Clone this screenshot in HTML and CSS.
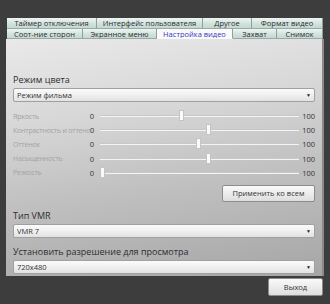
FILE: index.html
```html
<!DOCTYPE html>
<html lang="ru">
<head>
  <meta charset="UTF-8">
  <title>Настройка видео</title>
  <link rel="stylesheet" href="styles.css">
</head>
<body>
  <div class="window">
    <div class="tabs">
      <div class="tab-row">
        <div class="tab w90">Таймер отключения</div>
        <div class="tab w106">Интерфейс пользователя</div>
        <div class="tab w49">Другое</div>
        <div class="tab w71">Формат видео</div>
      </div>
      <div class="tab-row">
        <div class="tab w76">Соот-ние сторон</div>
        <div class="tab w74">Экранное меню</div>
        <div class="tab w76 active">Настройка видео</div>
        <div class="tab w44">Захват</div>
        <div class="tab w46">Снимок</div>
      </div>
    </div>

    <div class="panel">
      <div class="label first">Режим цвета</div>
      <div class="select">Режим фильма<span class="arrow">&#9660;</span></div>

      <div class="sliders">
        <div class="slider-row">
          <span class="s-label">Яркость</span><span class="s-min">0</span>
          <div class="track"><div class="thumb" style="left: 79px"></div></div>
          <span class="s-max">100</span>
        </div>
        <div class="slider-row">
          <span class="s-label">Контрастность и оттено</span><span class="s-min">0</span>
          <div class="track"><div class="thumb" style="left: 106px"></div></div>
          <span class="s-max">100</span>
        </div>
        <div class="slider-row">
          <span class="s-label">Оттенок</span><span class="s-min">0</span>
          <div class="track"><div class="thumb" style="left: 96px"></div></div>
          <span class="s-max">100</span>
        </div>
        <div class="slider-row">
          <span class="s-label">Насыщенность</span><span class="s-min">0</span>
          <div class="track"><div class="thumb" style="left: 106px"></div></div>
          <span class="s-max">100</span>
        </div>
        <div class="slider-row">
          <span class="s-label">Резкость</span><span class="s-min">0</span>
          <div class="track"><div class="thumb" style="left: 0px"></div></div>
          <span class="s-max">100</span>
        </div>
      </div>

      <div class="apply-wrap">
        <button class="btn apply">Применить ко всем настройкам</button>
      </div>

      <div class="label">Тип VMR</div>
      <div class="select">VMR 7<span class="arrow">&#9660;</span></div>

      <div class="label">Установить разрешение для просмотра</div>
      <div class="select">720x480<span class="arrow">&#9660;</span></div>
    </div>

    <div class="footer">
      <button class="btn exit">Выход</button>
    </div>
  </div>
</body>
</html>
```

FILE: styles.css
```css
* {
  margin: 0;
  padding: 0;
  box-sizing: border-box;
}

body {
  width: 330px;
  height: 304px;
  background: #3d3d3d;
  font-family: 'Open Sans', 'Liberation Sans', sans-serif;
  color: #333;
  overflow: hidden;
}

.window {
  padding: 18px 6px 0 6px;
}

.tabs {
  padding-left: 1px;
}

.tab-row {
  display: flex;
  height: 10.5px;
}

.tab {
  height: 100%;
  background: linear-gradient(180deg, #eef5f2 0%, #d2e3de 55%, #c4d8d2 100%);
  border-right: 1px solid #8f9f9b;
  border-bottom: 1px solid #9aaaa6;
  font-size: 7.5px;
  line-height: 10px;
  text-align: center;
  white-space: nowrap;
  overflow: hidden;
  color: #2c2c2c;
}

.tab.active {
  background: #fafafa;
  color: #3838c8;
  border-bottom-color: #fafafa;
}

.w90 { width: 90px; }
.w106 { width: 106px; }
.w49 { width: 49px; }
.w71 { width: 71px; }
.w76 { width: 76px; }
.w74 { width: 74px; }
.w44 { width: 44px; }
.w46 { width: 46px; }

.panel {
  height: 237px;
  padding: 0 7px;
  background: linear-gradient(172deg, #e9e9e9 0%, #d8d8d8 30%, #c0c0c0 60%, #a6a6a6 100%);
  border-right: 2px solid #8a8a8a;
  display: flex;
  flex-direction: column;
}

.label {
  font-size: 9px;
  line-height: 12px;
  height: 12px;
  color: #2e2e2e;
  margin-top: 8px;
}

.label.first {
  margin-top: 35px;
}

.select {
  position: relative;
  height: 14px;
  margin-top: 2px;
  padding-left: 3px;
  background: linear-gradient(180deg, #fbfbfb 0%, #f0f0f0 50%, #e2e2e2 100%);
  border: 1px solid #a0a0a0;
  border-radius: 2px;
  font-size: 7.5px;
  line-height: 12px;
  color: #333;
}

.arrow {
  position: absolute;
  right: 3px;
  top: 0;
  font-size: 5px;
  color: #222;
}

.sliders {
  margin-top: 7px;
  display: flex;
  flex-direction: column;
}

.slider-row {
  display: flex;
  align-items: center;
  height: 14.2px;
}

.s-label {
  width: 77px;
  font-size: 7px;
  letter-spacing: -0.2px;
  color: #a3a3a3;
  white-space: nowrap;
}

.s-min {
  width: 10px;
  font-size: 7.5px;
  color: #333;
}

.track {
  position: relative;
  width: 200px;
  height: 2px;
  background: #f4f4f4;
  border-top: 1px solid #c8c8c8;
}

.thumb {
  position: absolute;
  top: -6px;
  width: 5px;
  height: 11px;
  background: #fafafa;
  border: 1px solid #c4c4c4;
}

.s-max {
  margin-left: 3px;
  font-size: 7.5px;
  color: #333;
}

.apply-wrap {
  display: flex;
  justify-content: flex-end;
  margin-top: 5px;
  padding-right: 0;
}

.btn {
  font-family: 'Open Sans', 'Liberation Sans', sans-serif;
  font-size: 7.5px;
  color: #333;
  background: linear-gradient(180deg, #fafafa 0%, #ececec 50%, #dedede 100%);
  border: 1px solid #8c8c8c;
  border-radius: 2px;
}

.apply {
  width: 93px;
  height: 17px;
  line-height: 11px;
  padding-top: 2px;
  text-align: center;
  overflow: hidden;
  vertical-align: top;
  display: block;
}

.footer {
  display: flex;
  justify-content: flex-end;
  padding-top: 2px;
  padding-right: 1px;
}

.exit {
  width: 55px;
  height: 18px;
}
```
